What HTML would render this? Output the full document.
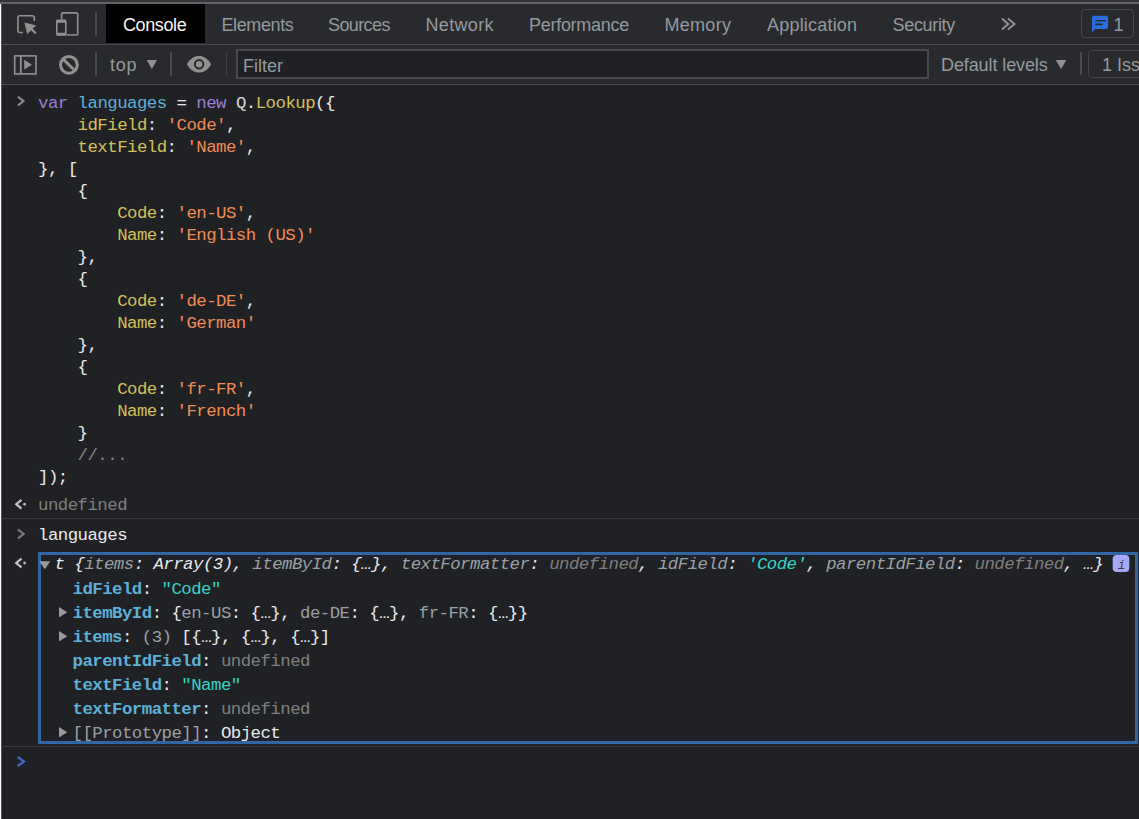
<!DOCTYPE html>
<html>
<head>
<meta charset="utf-8">
<title>DevTools Console</title>
<style>
html,body{margin:0;padding:0;}
body{width:1139px;height:819px;overflow:hidden;position:relative;background:#202124;font-family:"Liberation Sans",sans-serif;color:#e8eaed;}
.abs{position:absolute;}
#topstrip{left:0;top:0;width:1139px;height:2px;background:#35363a;}
#topline{left:0;top:2px;width:1139px;height:2px;background:#606165;}
#leftstrip{left:0;top:4px;width:1px;height:815px;background:#fff;}
#tabbar{left:1px;top:4px;width:1138px;height:40px;background:#292a2d;}
#tabborder{left:1px;top:44px;width:1138px;height:1px;background:#4b4c4f;}
#toolbar{left:1px;top:45px;width:1138px;height:39px;background:#292a2d;}
#toolborder{left:1px;top:84px;width:1138px;height:1px;background:#4b4c4f;}
.tab{position:absolute;top:14px;font-size:18px;line-height:22px;color:#949a9f;white-space:nowrap;}
#consoletab{left:106px;top:4px;width:99px;height:39px;background:#000;}
.vdiv{position:absolute;width:1px;background:#4b4c4f;}
.ui{position:absolute;font-size:18px;line-height:22px;color:#949a9f;white-space:nowrap;}
.mono{position:absolute;font-family:"Liberation Mono",monospace;font-size:17.4px;letter-spacing:-0.545px;line-height:22px;white-space:pre;color:#e8eaed;}
.k{color:#9a7fd5}.d{color:#5db0d7}.p{color:#d2c057}.s{color:#f28b54}.c{color:#858585}.v{color:#d9d9d9}
.hsep{position:absolute;left:1px;width:1138px;height:1px;background:#3a3a3a;}
.n{color:#5db0d7;font-weight:bold}
.str{color:#35d4c7}
.u{color:#7f7f7f}
.g{color:#9aa0a6}
.row{position:absolute;font-family:"Liberation Mono",monospace;font-size:17.4px;letter-spacing:-0.545px;line-height:24px;white-space:pre;color:#e8eaed;}
#icons{position:absolute;left:0;top:0;}
</style>
</head>
<body>
<div class="abs" id="topstrip"></div>
<div class="abs" id="topline"></div>
<div class="abs" id="tabbar"></div>
<div class="abs" id="tabborder"></div>
<div class="abs" id="toolbar"></div>
<div class="abs" id="toolborder"></div>
<div class="abs" id="leftstrip"></div>
<div class="abs" style="left:1px;top:4px;width:1px;height:815px;background:rgba(255,255,255,0.22)"></div>

<!-- tab bar -->
<div class="vdiv" style="left:95px;top:12px;height:24px;width:2px"></div>
<div class="abs" id="consoletab"></div>
<div class="tab" style="left:123px;color:#f4f5f6;letter-spacing:-0.39px">Console</div>
<div class="tab" style="left:221.5px;letter-spacing:-0.4px">Elements</div>
<div class="tab" style="left:328px;letter-spacing:-0.6px">Sources</div>
<div class="tab" style="left:425.5px;letter-spacing:0.34px">Network</div>
<div class="tab" style="left:529px;letter-spacing:-0.28px">Performance</div>
<div class="tab" style="left:664.5px;letter-spacing:0.28px">Memory</div>
<div class="tab" style="left:767px;letter-spacing:0.2px">Application</div>
<div class="tab" style="left:892.5px;letter-spacing:-0.32px">Security</div>

<!-- toolbar -->
<div class="vdiv" style="left:95px;top:52px;height:24px;width:2px"></div>
<div class="vdiv" style="left:170px;top:52px;height:24px;width:2px"></div>
<div class="vdiv" style="left:226px;top:52px;height:24px;background:#3f4145"></div>
<div class="vdiv" style="left:1080px;top:52px;height:23px;width:2px"></div>
<div class="ui" style="left:110px;top:54px;letter-spacing:0.7px">top</div>
<div class="abs" style="left:236px;top:49px;width:689px;height:26px;border:2px solid #47494d;background:#202124"></div>
<div class="ui" style="left:243px;top:55px">Filter</div>
<div class="ui" style="left:941px;top:54px;letter-spacing:-0.1px">Default levels</div>
<div class="abs" style="left:1088px;top:50px;width:60px;height:26px;border:1px solid #45474b;border-radius:4px"></div>
<div class="ui" style="left:1102px;top:54px">1 Issue</div>
<div class="abs" style="left:1081px;top:9px;width:51px;height:27px;border:1px solid #45474b;border-radius:4px"></div>
<div class="ui" style="left:1113.5px;top:14px">1</div>

<!-- console code -->
<div class="mono" style="left:38px;top:93px"><span class="k">var</span> <span class="d">languages</span> = <span class="k">new</span> <span class="v">Q</span>.<span class="p">Lookup</span>({
    <span class="p">idField</span>: <span class="s">'Code'</span>,
    <span class="p">textField</span>: <span class="s">'Name'</span>,
}, [
    {
        <span class="p">Code</span>: <span class="s">'en-US'</span>,
        <span class="p">Name</span>: <span class="s">'English (US)'</span>
    },
    {
        <span class="p">Code</span>: <span class="s">'de-DE'</span>,
        <span class="p">Name</span>: <span class="s">'German'</span>
    },
    {
        <span class="p">Code</span>: <span class="s">'fr-FR'</span>,
        <span class="p">Name</span>: <span class="s">'French'</span>
    }
    <span class="c">//...</span>
]);</div>
<div class="mono u" style="left:38px;top:495px">undefined</div>
<div class="hsep" style="top:518px"></div>
<div class="mono" style="left:38px;top:525px">languages</div>

<!-- object -->
<div class="abs" style="left:38px;top:552px;width:1094px;height:186px;border:3px solid #2f67a4;"></div>
<div class="row" style="left:54.5px;top:553px;font-style:italic">t {<span class="g">items</span>: Array(3), <span class="g">itemById</span>: {…}, <span class="g">textFormatter</span>: <span class="u">undefined</span>, <span class="g">idField</span>: <span class="str">'Code'</span>, <span class="g">parentIdField</span>: <span class="u">undefined</span>, …}</div>
<div class="row" style="left:72.5px;top:578px"><span class="n">idField</span>: <span class="str">"Code"</span>
<span class="n">itemById</span>: {<span class="g">en-US</span>: {…}, <span class="g">de-DE</span>: {…}, <span class="g">fr-FR</span>: {…}}
<span class="n">items</span>: <span class="g">(3)</span> [{…}, {…}, {…}]
<span class="n">parentIdField</span>: <span class="u">undefined</span>
<span class="n">textField</span>: <span class="str">"Name"</span>
<span class="n">textFormatter</span>: <span class="u">undefined</span>
<span class="g">[[Prototype]]</span>: Object</div>
<div class="hsep" style="top:746px"></div>

<svg id="icons" width="1139" height="819" viewBox="0 0 1139 819">
<g fill="none" stroke="#919191" stroke-width="1.6">
  <!-- inspect -->
  <path d="M34.3 21 V17.8 a2 2 0 0 0 -2 -2 H19.9 a2 2 0 0 0 -2 2 V30.5 a2 2 0 0 0 2 2 H22.9"/>
  <!-- device -->
  <path d="M61.6 19.6 V14.1 a1.2 1.2 0 0 1 1.2 -1.2 H76.5 a1.2 1.2 0 0 1 1.2 1.2 V33.8 a1.2 1.2 0 0 1 -1.2 1.2 H66.6"/>
  <rect x="56.8" y="20.4" width="9" height="14.6" rx="1"/>
  <path d="M56.8 21.3 H65.8 M56.8 34.2 H65.8" stroke-width="2.8"/>
  <!-- more tabs -->
  <path d="M1001.8 18.6 L1008.2 24 L1001.8 29.4 M1008 18.6 L1014.4 24 L1008 29.4" stroke-width="2"/>
  <!-- sidebar -->
  <rect x="14.7" y="55.9" width="21.3" height="18" />
  <path d="M20.8 55.9 V73.9" stroke-width="1.8"/>
</g>
<g fill="#919191">
  <path d="M24.4 22.6 L36.3 25.4 L32.6 28.6 L36.6 32.6 L35 34.2 L31 30.2 L27.2 34.2 Z"/>
  <path d="M24.2 59.8 L31.9 64.7 L24.2 69.5 Z"/>
  <path d="M146.7 60.1 H157 L151.85 68.9 Z"/>
  <path d="M1055.7 60 H1066.4 L1061.05 69 Z"/>
</g>
<!-- ban -->
<g fill="none" stroke="#919191" stroke-width="3">
  <circle cx="68.9" cy="64.85" r="8.4"/>
  <path d="M62.9 58.9 L74.9 70.8"/>
</g>
<!-- eye -->
<path d="M186.9 64.2 C190 58.5 194.5 55.9 199 55.9 C203.5 55.9 208 58.5 211.1 64.2 C208 69.9 203.5 72.5 199 72.5 C194.5 72.5 190 69.9 186.9 64.2 Z" fill="#919191"/>
<circle cx="199.1" cy="64.2" r="4.2" fill="#919191" stroke="#292a2d" stroke-width="2"/>
<!-- chat -->
<path d="M1094 15.8 H1106.1 a2 2 0 0 1 2 2 V27 a2 2 0 0 1 -2 2 H1095.2 L1092 32.2 V17.8 a2 2 0 0 1 2 -2 Z" fill="#2a6de0"/>
<path d="M1095.3 20.8 H1105.8 M1095.3 24.4 H1102.5" stroke="#292a2d" stroke-width="1.6"/>
<!-- prompt icons -->
<path d="M18 96.8 L23.5 101 L18 105.3" fill="none" stroke="#8e8e8e" stroke-width="2.1"/>
<path d="M17.9 529.6 L23.7 534 L17.9 538.4" fill="none" stroke="#7a7a7a" stroke-width="2.1"/>
<path d="M17.6 757 L24 761.5 L17.6 766" fill="none" stroke="#3f66c4" stroke-width="2.3"/>
<g fill="none" stroke="#c4c4c4" stroke-width="2.2">
  <path d="M21.5 499.9 L16.2 504.2 L21.5 508.6"/>
  <path d="M21.5 558.7 L16.2 563 L21.5 567.4"/>
</g>
<circle cx="24.6" cy="504.2" r="1.4" fill="#bdbdbd"/>
<circle cx="24.6" cy="563" r="1.4" fill="#bdbdbd"/>
<!-- tree arrows -->
<g fill="#9a9a9a">
  <path d="M39.3 561.2 H50.3 L44.8 569.2 Z"/>
  <path d="M59 607 L67.2 612.2 L59 617.4 Z"/>
  <path d="M59 631 L67.2 636.2 L59 641.4 Z"/>
  <path d="M59 727 L67.2 732.2 L59 737.4 Z"/>
</g>
<!-- info badge -->
<rect x="1112.7" y="555" width="16.6" height="17" rx="4" fill="#a5a8f6"/>
<text x="1121.4" y="568.6" font-family="Liberation Mono, monospace" font-size="12.5" font-style="italic" fill="#3b3b46" text-anchor="middle">i</text>
</svg>
</body>
</html>
